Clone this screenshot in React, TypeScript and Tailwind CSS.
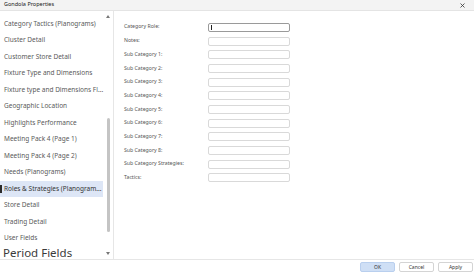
const categories = [
  'Category Tactics (Planograms)',
  'Cluster Detail',
  'Customer Store Detail',
  'Fixture Type and Dimensions',
  'Fixture type and Dimensions Fl...',
  'Geographic Location',
  'Highlights Performance',
  'Meeting Pack 4 (Page 1)',
  'Meeting Pack 4 (Page 2)',
  'Needs (Planograms)',
  'Roles & Strategies (Planogram...',
  'Store Detail',
  'Trading Detail',
  'User Fields',
];

const fields = [
  'Category Role:',
  'Notes:',
  'Sub Category 1:',
  'Sub Category 2:',
  'Sub Category 3:',
  'Sub Category 4:',
  'Sub Category 5:',
  'Sub Category 6:',
  'Sub Category 7:',
  'Sub Category 8:',
  'Sub Category Strategies:',
  'Tactics:',
];

export default function App() {
  const selected = 'Roles & Strategies (Planogram...';

  return (
    <div
      className="w-[474px] h-[274px] bg-white flex flex-col overflow-hidden text-[#333]"
      style={{ fontFamily: '"Noto Sans", "Open Sans", sans-serif' }}
    >
      <div className="h-[11px] flex items-center justify-between bg-[#f3f3f3] border-b border-[#e4e4e4] pl-[4px] pr-[9px]">
        <span className="text-[5.5px] leading-none text-[#222]">Gondola Properties</span>
        <svg width="5" height="5" viewBox="0 0 10 10" className="text-[#333]">
          <path d="M1 1 L9 9 M9 1 L1 9" stroke="currentColor" strokeWidth="1.6" />
        </svg>
      </div>

      <div className="flex-1 flex min-h-0">
        <div className="w-[114px] flex border-r border-[#e6e6e6]">
          <div className="w-[104px] pt-[4.5px] flex flex-col">
            {categories.map((c) => (
              <div
                key={c}
                className={`relative h-[16.5px] shrink-0 flex items-center pl-[4px] text-[6.5px] whitespace-nowrap ${
                  c === selected ? 'bg-[#dde6f6] text-[#333]' : 'text-[#5a5a5a]'
                }`}
              >
                {c === selected && (
                  <span className="absolute left-0 top-[4px] w-[2px] h-[8px] bg-[#2b2b2b]" />
                )}
                {c}
              </div>
            ))}
            <div className="h-[16px] flex items-center pl-[3px] text-[11.5px] leading-none text-[#3a3a3a] whitespace-nowrap">
              Period Fields
            </div>
          </div>
          <div className="w-[10px] flex flex-col items-center pt-[4px] pb-[4px]">
            <svg width="4" height="3" viewBox="0 0 4 3">
              <path d="M0 3 L2 0 L4 3 Z" fill="#777" />
            </svg>
            <div className="flex-1 w-[3px] flex flex-col pt-[100px] pb-[20px]">
              <div className="flex-1 bg-[#c4c4c4] rounded-[2px]" />
            </div>
            <svg width="4" height="3" viewBox="0 0 4 3">
              <path d="M0 0 L4 0 L2 3 Z" fill="#777" />
            </svg>
          </div>
        </div>

        <div className="flex-1 pl-[10px] pt-[9.5px] flex flex-col">
          {fields.map((f, i) => (
            <div key={f} className="h-[13.7px] shrink-0 flex items-center">
              <span className="w-[84px] text-[5.2px] text-[#555] whitespace-nowrap">{f}</span>
              <div
                className={`w-[82px] h-[9px] rounded-[2px] bg-white flex items-center pl-[1.5px] border ${
                  i === 0 ? 'border-[#9a9a9a]' : 'border-[#d9d9d9]'
                }`}
              >
                {i === 0 && <span className="w-[0.8px] h-[5px] bg-[#222]" />}
              </div>
            </div>
          ))}
        </div>
      </div>

      <div className="h-[15px] border-t border-[#e6e6e6] flex items-center justify-end gap-[4px] pr-[1px]">
        <button className="w-[35px] h-[10px] rounded-[2px] bg-[#cfdff5] border border-[#b9cfee] text-[5px] text-[#333] leading-none">
          OK
        </button>
        <button className="w-[35px] h-[10px] rounded-[2px] bg-white border border-[#d4d4d4] text-[5px] text-[#333] leading-none">
          Cancel
        </button>
        <button className="w-[35px] h-[10px] rounded-[2px] bg-white border border-[#d4d4d4] text-[5px] text-[#333] leading-none">
          Apply
        </button>
      </div>
    </div>
  );
}
